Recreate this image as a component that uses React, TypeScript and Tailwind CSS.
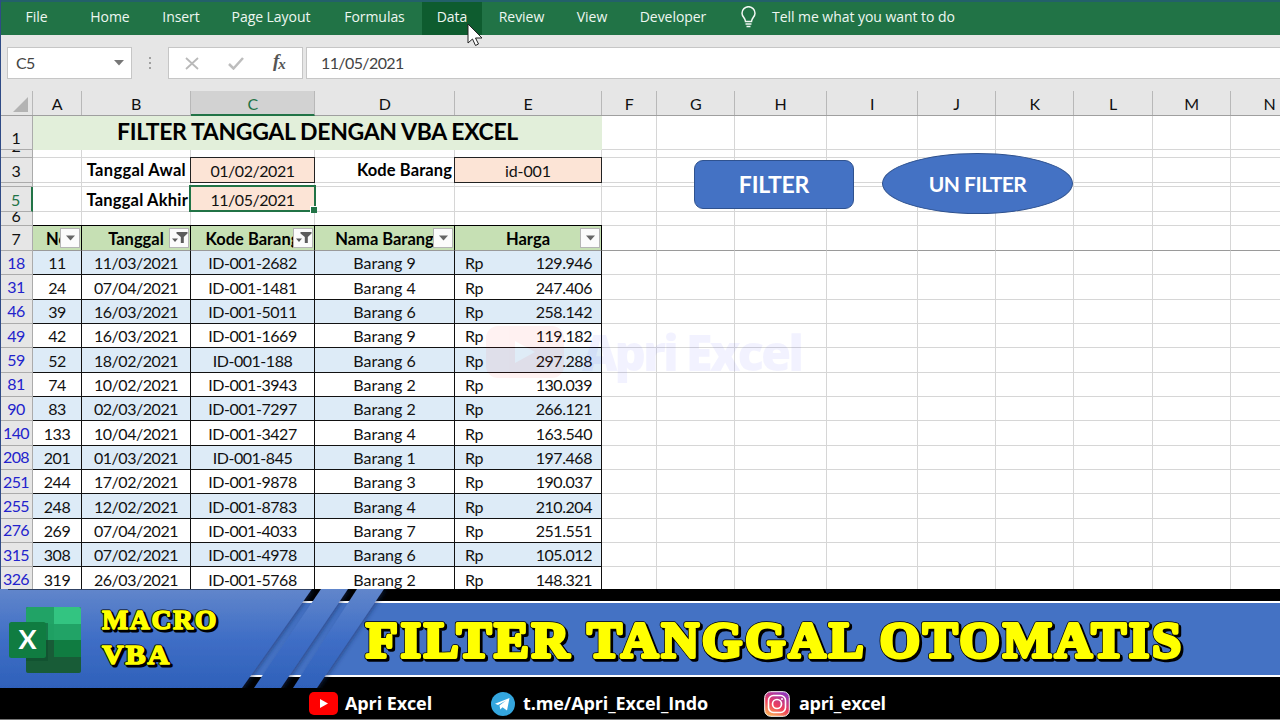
import type { ReactNode } from "react";

const columns = [
  { name: "A", width: "w-[49px]" },
  { name: "B", width: "w-[109px]" },
  { name: "C", width: "w-[124px]" },
  { name: "D", width: "w-[140px]" },
  { name: "E", width: "w-[147px]" },
  { name: "F", width: "w-[55px]" },
  { name: "G", width: "w-[78px]" },
  { name: "H", width: "w-[92px]" },
  { name: "I", width: "w-[91px]" },
  { name: "J", width: "w-[78px]" },
  { name: "K", width: "w-[78px]" },
  { name: "L", width: "w-[79px]" },
  { name: "M", width: "w-[78px]" },
  { name: "N", width: "w-[78px]" },
];

const tabs = [
  { label: "File", width: "w-[73px]" },
  { label: "Home", width: "w-[74px]" },
  { label: "Insert", width: "w-[68px]" },
  { label: "Page Layout", width: "w-[112px]" },
  { label: "Formulas", width: "w-[95px]" },
  { label: "Data", width: "w-[60px] bg-[#0e5c2f]" },
  { label: "Review", width: "w-[79px]" },
  { label: "View", width: "w-[62px]" },
  { label: "Developer", width: "w-[100px]" },
];

const rows = [
  { row: 18, no: 11, date: "11/03/2021", code: "ID-001-2682", item: "Barang 9", price: "129.946" },
  { row: 31, no: 24, date: "07/04/2021", code: "ID-001-1481", item: "Barang 4", price: "247.406" },
  { row: 46, no: 39, date: "16/03/2021", code: "ID-001-5011", item: "Barang 6", price: "258.142" },
  { row: 49, no: 42, date: "16/03/2021", code: "ID-001-1669", item: "Barang 9", price: "119.182" },
  { row: 59, no: 52, date: "18/02/2021", code: "ID-001-188", item: "Barang 6", price: "297.288" },
  { row: 81, no: 74, date: "10/02/2021", code: "ID-001-3943", item: "Barang 2", price: "130.039" },
  { row: 90, no: 83, date: "02/03/2021", code: "ID-001-7297", item: "Barang 2", price: "266.121" },
  { row: 140, no: 133, date: "10/04/2021", code: "ID-001-3427", item: "Barang 4", price: "163.540" },
  { row: 208, no: 201, date: "01/03/2021", code: "ID-001-845", item: "Barang 1", price: "197.468" },
  { row: 251, no: 244, date: "17/02/2021", code: "ID-001-9878", item: "Barang 3", price: "190.037" },
  { row: 255, no: 248, date: "12/02/2021", code: "ID-001-8783", item: "Barang 4", price: "210.204" },
  { row: 276, no: 269, date: "07/04/2021", code: "ID-001-4033", item: "Barang 7", price: "251.551" },
  { row: 315, no: 308, date: "07/02/2021", code: "ID-001-4978", item: "Barang 6", price: "105.012" },
  { row: 326, no: 319, date: "26/03/2021", code: "ID-001-5768", item: "Barang 2", price: "148.321" },
];

const headings = [
  { label: "No", filtered: false },
  { label: "Tanggal", filtered: true },
  { label: "Kode Barang", filtered: true },
  { label: "Nama Barang", filtered: false },
  { label: "Harga", filtered: false },
];

function RowHeader({ children, className = "" }: { children?: ReactNode; className?: string }) {
  return (
    <div className={`flex w-[33px] shrink-0 justify-center overflow-hidden border-r border-b border-[#ababab] bg-[#e6e6e6] ${className}`}>
      {children}
    </div>
  );
}

// Plain gridline cells from column index `from` up to (not including) `to`
function EmptyCells({ from, to = columns.length }: { from: number; to?: number }) {
  return (
    <>
      {columns.slice(from, to).map((c) => (
        <div key={c.name} className={`${c.width} shrink-0 border-r border-b border-[#d6d6d6]`} />
      ))}
    </>
  );
}

function FilterButton({ filtered }: { filtered: boolean }) {
  return (
    <span className="absolute right-[1px] bottom-[2px] flex h-[20px] w-[20px] items-center justify-center border border-[#b5b5b5] bg-[#fbfbfb]">
      {filtered ? (
        <svg width="17" height="16" viewBox="0 0 17 16" fill="#5c5c5c" className="shrink-0">
          <path d="M1 8.500h6L4 12z" />
          <path d="M5.500 2h11v1.500L12.800 7v6h-3V7L5.500 3.500z" />
        </svg>
      ) : (
        <svg width="9" height="6" viewBox="0 0 9 6" fill="#666">
          <path d="M0 0.500h9L4.500 5.500z" />
        </svg>
      )}
    </span>
  );
}

function Ribbon() {
  return (
    <div className="flex h-[35px] shrink-0 border-t-2 border-[#23606a] bg-[#217346] font-['Open_Sans','Noto_Sans',sans-serif] text-[14px] font-medium tracking-[-0.05px] text-[#eef7f1]">
      {tabs.map((t) => (
        <div key={t.label} className={`${t.width} flex shrink-0 items-center justify-center pb-[5px] whitespace-nowrap`}>
          {t.label}
        </div>
      ))}
      <div className="flex items-center pb-[5px] pl-[17px] whitespace-nowrap">
        <svg width="17" height="22" viewBox="0 0 17 22" fill="none" stroke="#f2f8f4" strokeWidth="1.500" className="mt-[2px] mr-[15px]">
          <path d="M5.500 15.500C5.500 12 2 11 2 7.200a6.500 6.500 0 0 1 13 0c0 3.800-3.500 4.800-3.500 8.300z" />
          <path d="M5.500 18h6M6.500 20.500h4" />
        </svg>
        Tell me what you want to do
      </div>
    </div>
  );
}

function FormulaBar() {
  return (
    <div className="flex h-[56px] shrink-0 items-start bg-[#e6e6e6] pt-[12px] pl-[7px] text-[16px] text-[#444]">
      <div className="flex h-[32px] w-[125px] items-center justify-between border border-[#c6c6c6] bg-white pr-[7px] pl-[8px]">
        <span className="tracking-[-0.8px]">C5</span>
        <svg width="10" height="6" viewBox="0 0 10 6" fill="#777">
          <path d="M0 0h10L5 5.500z" />
        </svg>
      </div>
      <div className="flex h-[32px] w-[36px] flex-col items-center justify-center gap-[3px]">
        <i className="size-[2px] bg-[#a0a0a0]" />
        <i className="size-[2px] bg-[#a0a0a0]" />
        <i className="size-[2px] bg-[#a0a0a0]" />
      </div>
      <div className="flex h-[32px] w-[135px] items-center border border-[#c6c6c6] bg-white pl-[16px]">
        <svg width="14" height="13" viewBox="0 0 14 13" stroke="#b9b9b9" strokeWidth="1.800">
          <path d="M1 1l12 11M13 1L1 12" />
        </svg>
        <svg width="16" height="13" viewBox="0 0 16 13" fill="none" stroke="#bdbdbd" strokeWidth="2.500" className="ml-[29px]">
          <path d="M1 7l4.500 4.500L15 1" />
        </svg>
        <span className="ml-[29px] pb-[3px] font-['Liberation_Serif',serif] text-[19px] font-bold tracking-[-1px] text-[#555] italic">
          f<span className="relative top-[2px] text-[15px]">x</span>
        </span>
      </div>
      <div className="ml-[3px] flex h-[32px] flex-1 items-center border border-r-0 border-[#c6c6c6] bg-white pl-[14px] tracking-[-0.6px]">
        11/05/2021
      </div>
    </div>
  );
}

function Sheet() {
  return (
    <div className="relative h-[498px] w-full shrink-0 overflow-hidden bg-white text-[16px] tracking-[-0.45px] text-[#111]">
      {/* Column letters */}
      <div className="flex h-[25px] border-b border-[#9f9f9f] bg-[#e6e6e6]">
        <div className="flex w-[33px] shrink-0 items-end justify-end border-r border-[#b8b8b8] pr-[4px] pb-[3px]">
          <svg width="15" height="15" fill="#b3b3b3">
            <path d="M15 0v15H0z" />
          </svg>
        </div>
        {columns.map((c) => (
          <div
            key={c.name}
            className={`${c.width} flex shrink-0 items-center justify-center border-r border-[#b8b8b8] pt-[2px] ${
              c.name === "C" ? "-mb-px border-b-2 border-b-[#217346] bg-[#d2d2d2] text-[#217346]" : ""
            }`}
          >
            {c.name}
          </div>
        ))}
      </div>

      <div className="flex h-[34px]">
        <RowHeader className="items-end leading-[22px]">1</RowHeader>
        <div className="flex w-[569px] shrink-0 items-center justify-center bg-[#e2efda] pb-[3px] text-[23px] font-bold tracking-[-0.35px] text-black">
          FILTER TANGGAL DENGAN VBA EXCEL
        </div>
        <EmptyCells from={5} />
      </div>
      <div className="flex h-[8px]">
        <RowHeader className="items-end leading-[18px]">
          <span className="relative top-[-2px]">2</span>
        </RowHeader>
        <EmptyCells from={0} />
      </div>
      <div className="flex h-[25px]">
        <RowHeader className="items-center pt-px">3</RowHeader>
        <EmptyCells from={0} to={1} />
        <div className="flex w-[109px] shrink-0 items-center justify-end border-b border-[#d6d6d6] pt-px pr-[5px] text-[16.500px] font-bold tracking-[0.3px] whitespace-nowrap text-black">
          Tanggal Awal
        </div>
        <div className="-mt-px -ml-px flex w-[125px] shrink-0 items-center justify-center border border-[#222] bg-[#fce4d6] pt-px">01/02/2021</div>
        <div className="flex w-[140px] shrink-0 items-center justify-end border-b border-[#d6d6d6] pt-px pr-[3px] text-[16.500px] font-bold tracking-[0.1px] text-black">
          Kode Barang
        </div>
        <div className="-mt-px -ml-px flex w-[148px] shrink-0 items-center justify-center border border-[#222] bg-[#fce4d6] pt-px tracking-[-0.1px]">id-001</div>
        <EmptyCells from={5} />
      </div>
      <div className="flex h-[4px]">
        <RowHeader />
        <EmptyCells from={0} />
      </div>
      <div className="flex h-[25px]">
        <RowHeader className="items-center border-r-2 border-r-[#217346] bg-[#d2d2d2] pt-[2px] text-[#217346]">5</RowHeader>
        <EmptyCells from={0} to={1} />
        <div className="flex w-[109px] shrink-0 items-center justify-end border-b border-[#d6d6d6] pt-[2px] pr-[3px] text-[16.500px] font-bold tracking-[0.2px] whitespace-nowrap text-black">
          Tanggal Akhir
        </div>
        <div className="relative -mt-[2px] -mr-px -ml-[2px] flex w-[127px] shrink-0 items-center justify-center border-2 border-[#217346] bg-[#fce4d6] pt-[3px]">
          11/05/2021
          <i className="absolute -right-[3px] -bottom-[3px] size-[7px] border-t border-l border-white bg-[#217346]" />
        </div>
        <EmptyCells from={3} />
      </div>
      <div className="flex h-[14px]">
        <RowHeader className="items-end leading-[20px]">
          <span className="relative top-[1px]">6</span>
        </RowHeader>
        <EmptyCells from={0} />
      </div>

      <div className="flex h-[25px]">
        <RowHeader className="items-center pt-[2px]">7</RowHeader>
        {headings.map((h, i) => (
          <div
            key={h.label}
            className={`${columns[i].width} relative -mt-px flex shrink-0 items-center justify-center overflow-hidden border-t border-r border-b border-black border-b-[#9a9a9a] bg-[#c6e0b4] pt-[3px] text-[16.500px] font-bold tracking-[0px] whitespace-nowrap text-black`}
          >
            {h.label}
            <FilterButton filtered={h.filtered} />
          </div>
        ))}
        {columns.slice(5).map((c) => (
          <div key={c.name} className={`${c.width} shrink-0 border-r border-b border-r-[#d6d6d6] border-b-[#9a9a9a]`} />
        ))}
      </div>

      {rows.map((r, i) => (
        <div
          key={r.row}
          className={`flex h-[24.350px] [&>.cell]:border-r [&>.cell]:border-b [&>.cell]:border-[#111] [&>.cell]:pt-px ${i % 2 === 0 ? "[&>.cell]:bg-[#ddebf7]" : ""}`}
        >
          <RowHeader className="flex-col items-stretch text-center text-[#2323cc]">
            <span className="flex-1 border-b border-[#b4b4b4] leading-[25px] tracking-[-0.6px]">{r.row}</span>
            <span className="h-[2px]" />
          </RowHeader>
          <div className="cell flex w-[49px] shrink-0 items-center justify-center">{r.no}</div>
          <div className="cell flex w-[109px] shrink-0 items-center justify-center">{r.date}</div>
          <div className="cell flex w-[124px] shrink-0 items-center justify-center">{r.code}</div>
          <div className="cell flex w-[140px] shrink-0 items-center justify-center tracking-[0px]">{r.item}</div>
          <div className="cell flex w-[147px] shrink-0 items-center justify-between pr-[9px] pl-[10px]">
            <span>Rp</span>
            <span>{r.price}</span>
          </div>
          <EmptyCells from={5} />
        </div>
      ))}

      {/* Macro buttons floating over the cells */}
      <button className="absolute top-[69px] left-[694px] h-[49px] w-[160px] rounded-[9px] border border-[#2f528f] bg-[#4472c4] text-[23px] font-bold tracking-[-0.2px] text-white">
        FILTER
      </button>
      <button className="absolute top-[62px] left-[882px] h-[61px] w-[191px] rounded-[50%] border border-[#2f528f] bg-[#4472c4] text-[21px] font-bold tracking-[-0.500px] text-white">
        UN FILTER
      </button>

      {/* Channel watermark */}
      <div className="absolute top-[231px] left-[486px] flex items-center opacity-[0.06]">
        <span className="flex h-[52px] w-[78px] items-center justify-center rounded-[12px] bg-[#ff2020]">
          <svg width="22" height="24" fill="#fff">
            <path d="M1 1l20 11L1 23z" />
          </svg>
        </span>
        <span className="relative ml-[18px] font-['Open_Sans','Noto_Sans',sans-serif] text-[49px] leading-[60px] font-extrabold tracking-[-3px] whitespace-nowrap text-[#3333ff]">
          Apri Excel
        </span>
      </div>
    </div>
  );
}

// Chunky rounded serif lettering: shadow, outline, then the yellow face
function PosterText({ x, y, size, width, fatness, children }: { x: number; y: number; size: number; width: number; fatness: number; children: string }) {
  const shared = {
    fontSize: size,
    textLength: width,
    letterSpacing: size * 0.06,
    lengthAdjust: "spacingAndGlyphs" as const,
    strokeLinejoin: "round" as const,
  };
  return (
    <g className="font-['Liberation_Serif',serif] font-bold">
      <text x={x + 2} y={y + 2} {...shared} fill="#000" stroke="#000" strokeWidth={fatness + 1.5}>
        {children}
      </text>
      <text x={x} y={y} {...shared} fill="#000" stroke="#000" strokeWidth={fatness + 1.5} aria-hidden="true">
        {children}
      </text>
      <text x={x} y={y} {...shared} fill="#ff0" stroke="#ff0" strokeWidth={fatness} aria-hidden="true">
        {children}
      </text>
    </g>
  );
}

function Banner() {
  return (
    <svg width="1280" height="99" viewBox="0 0 1280 99" className="block shrink-0 bg-black">
      <defs>
        <linearGradient id="panel" x1="0" y1="0" x2="0" y2="1">
          <stop offset="0" stopColor="#6186cb" />
          <stop offset="0.500" stopColor="#3f6ec6" />
          <stop offset="1" stopColor="#2f61ba" />
        </linearGradient>
        <filter id="shade" x="-10%" y="-10%" width="130%" height="120%">
          <feDropShadow dx="2" dy="1" stdDeviation="2" floodColor="#10285c" floodOpacity="0.500" />
        </filter>
      </defs>
      <rect x="230" y="12" width="1050" height="76" fill="#fff" />
      <rect x="230" y="14" width="1050" height="72" fill="#4472c4" />
      <path d="M357 0h27l-67 99h-24z" fill="url(#panel)" filter="url(#shade)" />
      <path d="M321 0h27l-67 99h-27z" fill="url(#panel)" filter="url(#shade)" />
      <path d="M0 0h312l-70 99H0z" fill="url(#panel)" filter="url(#shade)" />
      <path d="M8 0h304" stroke="#000" />

      {/* Excel logo */}
      <g transform="translate(9 18)">
        <rect x="17" y="0" width="55" height="66" rx="2" fill="#185c37" />
        <path d="M19 0h26v17H17V2a2 2 0 0 1 2-2z" fill="#21a366" />
        <path d="M45 0h25a2 2 0 0 1 2 2v15H45z" fill="#33c481" />
        <path d="M17 17h28v16H17z" fill="#1fa063" />
        <path d="M45 17h27v16H45z" fill="#21a366" />
        <path d="M45 33h27v17H45z" fill="#107c41" />
        <rect x="17" y="16" width="22" height="38" fill="#0a4a2a" opacity="0.450" />
        <rect x="0" y="15" width="37" height="36" rx="2.500" fill="#107c41" />
        <text x="18.500" y="42" textAnchor="middle" fontSize="27" fill="#fff" className="font-['Lato',sans-serif] font-bold">
          X
        </text>
      </g>

      <PosterText x={102} y={40} size={27} width={116} fatness={1.6}>MACRO</PosterText>
      <PosterText x={102} y={75} size={27} width={69} fatness={1.6}>VBA</PosterText>
      <PosterText x={366} y={68} size={51} width={818} fatness={3.8}>FILTER TANGGAL OTOMATIS</PosterText>
    </svg>
  );
}

function Socials() {
  return (
    <div className="flex h-[32px] shrink-0 items-center border-b border-[#777] bg-black pl-[309px] font-['Open_Sans','Noto_Sans',sans-serif] text-[18px] font-bold tracking-[-0.1px] whitespace-nowrap text-white">
      <div className="flex w-[182px] items-center">
        <svg width="29" height="23" viewBox="0 0 29 23" className="mr-[7px]">
          <rect width="29" height="23" rx="5" fill="#f00" />
          <path d="M11 7l8 4.500-8 4.500z" fill="#fff" />
        </svg>
        Apri Excel
      </div>
      <div className="flex w-[273px] items-center">
        <svg width="24" height="24" viewBox="0 0 24 24" className="mr-[8px]">
          <circle cx="12" cy="12" r="12" fill="#34a6de" />
          <path d="M4 11.800L18.500 6 16 18.500l-4.500-3.300-2.200 2.300-.8-4.100L15 8.500l-8 4.400z" fill="#fff" />
        </svg>
        t.me/Apri_Excel_Indo
      </div>
      <div className="flex items-center tracking-[-0.300px]">
        <svg width="26" height="26" viewBox="0 0 26 26" fill="none" className="mr-[9px]">
          <defs>
            <linearGradient id="insta" x1="0.200" y1="1" x2="0.700" y2="0">
              <stop offset="0" stopColor="#fdb457" />
              <stop offset="0.450" stopColor="#ee3e5b" />
              <stop offset="1" stopColor="#9136bd" />
            </linearGradient>
          </defs>
          <rect x="0.700" y="0.700" width="24.600" height="24.600" rx="6" fill="url(#insta)" stroke="#fff" />
          <rect x="4.500" y="4.500" width="17" height="17" rx="5" stroke="#fff" strokeWidth="1.600" />
          <circle cx="13" cy="13" r="4.500" stroke="#fff" strokeWidth="1.700" />
          <circle cx="18" cy="8" r="1" fill="#fff" />
        </svg>
        apri_excel
      </div>
    </div>
  );
}

export default function App() {
  return (
    <div className="relative flex h-[720px] w-[1280px] flex-col overflow-hidden bg-white font-['Lato','Liberation_Sans',sans-serif]">
      <Ribbon />
      <FormulaBar />
      <Sheet />
      <Banner />
      <Socials />
      <i className="absolute top-0 left-0 h-[589px] w-px bg-[#2f4b86]" />

      {/* Mouse pointer over the Data tab */}
      <svg width="16" height="24" viewBox="0 0 16 24" className="absolute top-[23px] left-[467px]">
        <path d="M1 1v19l4.500-4 3 6.500 3-1.500-3-6H15z" fill="#fff" stroke="#222" />
      </svg>
    </div>
  );
}
